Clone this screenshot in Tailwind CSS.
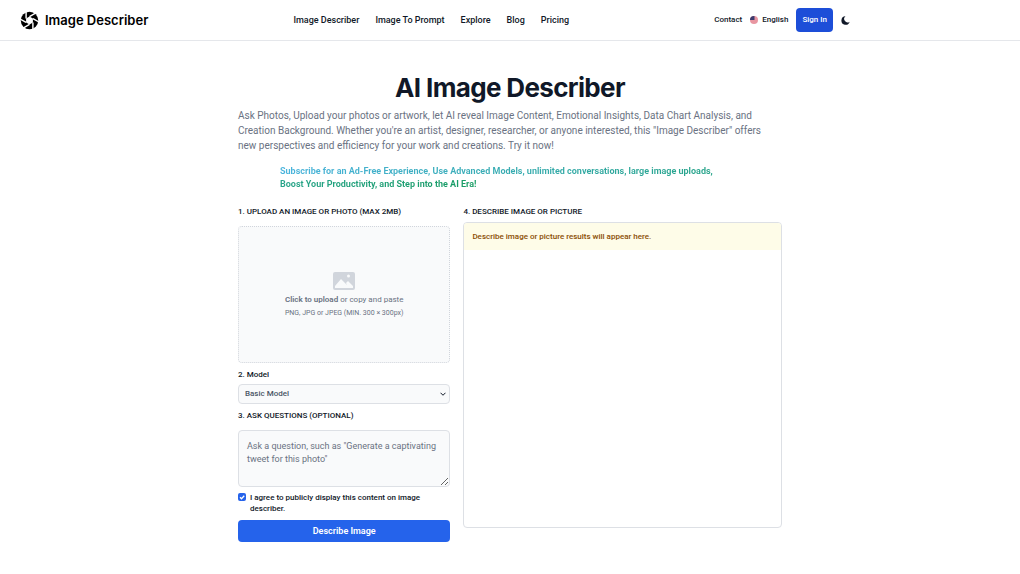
<!DOCTYPE html>
<html lang="en">
<head>
<meta charset="UTF-8">
<meta name="viewport" content="width=device-width, initial-scale=1.0">
<title>AI Image Describer</title>
<script src="https://cdn.jsdelivr.net/npm/@tailwindcss/browser@4"></script>
</head>
<body class="min-h-screen bg-white font-['Roboto',sans-serif] text-gray-900">

<!-- Header -->
<header class="border-b border-gray-200">
  <div class="w-5/6 h-10 pl-5 flex justify-between items-center">
    <a href="#" class="flex items-center gap-1.5 pt-px font-['Inter',sans-serif] text-[13px] font-semibold text-black">
      <svg class="w-[19px] h-[19px]" viewBox="0 0 24 24" fill="currentColor" aria-hidden="true">
        <circle cx="12" cy="12" r="11"/>
        <path fill="#fff" d="M12 7l4.300 2.500v5L12 17l-4.300-2.500v-5z"/>
        <path fill="none" stroke="#fff" stroke-width="1.800" d="M12 7l8.600-5M16.300 9.500l8.700 5M16.300 14.500v10M12 17l-8.600 5M7.700 14.500l-8.700-5M7.700 9.500v-10"/>
      </svg>
      Image Describer
    </a>
    <nav class="flex gap-4 pt-px text-[9px] leading-[13px] font-medium">
      <a href="#">Image Describer</a>
      <a href="#">Image To Prompt</a>
      <a href="#">Explore</a>
      <a href="#">Blog</a>
      <a href="#">Pricing</a>
    </nav>
    <div class="flex items-center gap-2 text-[8px] font-medium">
      <a href="#">Contact</a>
      <button type="button" class="flex items-center gap-1">
        <svg class="w-2 h-2 rounded-full" viewBox="0 0 16 16" aria-hidden="true">
          <path fill="#fff" d="M0 0h16v16H0z"/>
          <path fill="#d22f45" d="M0 1h16v2H0zM0 5h16v2H0zM0 9h16v2H0zM0 13h16v2H0z"/>
          <path fill="#3c3b6e" d="M0 0h9v8H0z"/>
        </svg>
        English
      </button>
      <a href="#" class="rounded bg-[#1d4ed8] px-1.5 py-1.5 text-white">Sign In</a>
      <button type="button" aria-label="Toggle dark mode">
        <svg class="w-[9px] h-[9px]" viewBox="0 0 20 20" fill="currentColor" aria-hidden="true"><path d="M10 .8A9.300 9.300 0 1 0 19.200 12.500 6.800 6.800 0 0 1 10 .8Z"/></svg>
      </button>
    </div>
  </div>
</header>

<main class="max-w-[544px] mx-auto pt-8">
  <h1 class="text-center font-['Inter',sans-serif] text-[26px] leading-[30px] font-bold tracking-tight">AI Image Describer</h1>
  <p class="mt-[5px] text-[10px] leading-[15px] text-gray-500">Ask Photos, Upload your photos or artwork, let AI reveal Image Content, Emotional Insights, Data Chart Analysis, and<br>Creation Background. Whether you're an artist, designer, researcher, or anyone interested, this "Image Describer" offers<br>new perspectives and efficiency for your work and creations. Try it now!</p>
  <div class="mt-3 px-[42px] text-[9px] leading-[13px] font-bold">
    <a href="#" class="bg-gradient-to-r from-[#4ab4dd] to-[#169b62] bg-clip-text text-transparent">Subscribe for an Ad-Free Experience, Use Advanced Models, unlimited conversations, large image uploads,<br>Boost Your Productivity, and Step into the AI Era!</a>
  </div>

  <div class="mt-[15px] grid grid-cols-[2fr_3fr] gap-[13px]">
    <form>
      <!-- Upload -->
      <h2 class="text-[8px] leading-[11px] font-medium uppercase">1. Upload an image or photo (max 2MB)</h2>
      <label for="photo" class="mt-[9px] h-[137px] flex flex-col items-center justify-center rounded border border-dotted border-gray-300 bg-gray-50 text-gray-500 cursor-pointer">
        <svg class="w-6 h-5 text-gray-300" viewBox="0 0 24 20" fill="currentColor" aria-hidden="true">
          <path fill-rule="evenodd" d="M3 1h18a2 2 0 0 1 2 2v14a2 2 0 0 1-2 2H3a2 2 0 0 1-2-2V3a2 2 0 0 1 2-2zM3 15v2h18v-2l-5-5-2 2 1 2-6-6zM15 5a1.500 1.500 0 1 0 3 0 1.500 1.500 0 1 0-3 0z"/>
        </svg>
        <span class="mt-[3px] text-[8px] leading-[11px]"><span class="font-semibold">Click to upload</span> or copy and paste</span>
        <span class="mt-1 text-[7px] leading-[9px]">PNG, JPG or JPEG (MIN. 300 × 300px)</span>
        <input id="photo" type="file" class="hidden">
      </label>

      <!-- Model -->
      <label for="model" class="mt-1.5 block text-[8px] leading-[11px] font-medium">2. Model</label>
      <div class="mt-1 grid items-center">
        <select id="model" class="col-start-1 row-start-1 h-5 w-full appearance-none rounded border border-[#dde0e5] bg-gray-50 px-1.5 text-[8px] font-medium text-gray-600">
          <option>Basic Model</option>
        </select>
        <svg class="col-start-1 row-start-1 justify-self-end mr-1 w-1.5 h-1.5 pointer-events-none" viewBox="0 0 12 12" fill="none" stroke="currentColor" stroke-width="2" aria-hidden="true"><path d="M1 3.500l5 5 5-5"/></svg>
      </div>

      <!-- Question -->
      <label for="question" class="mt-1.5 block text-[8px] leading-[11px] font-medium uppercase">3. Ask questions (optional)</label>
      <textarea id="question" class="mt-[9px] block h-[57px] w-full rounded border border-[#dde0e5] bg-gray-50 px-2 py-[9px] text-[9px] leading-[13px] placeholder:text-gray-500" placeholder="Ask a question, such as &quot;Generate a captivating tweet for this photo&quot;"></textarea>

      <div class="mt-[5px] flex items-start gap-1">
        <span class="grid shrink-0 pt-px">
          <input id="agree" type="checkbox" checked class="col-start-1 row-start-1 w-2 h-2 appearance-none rounded-xs bg-[#2563eb]">
          <svg class="col-start-1 row-start-1 w-2 h-2 pointer-events-none" viewBox="0 0 16 16" fill="none" stroke="#fff" stroke-width="2.500" aria-hidden="true"><path d="M4 8.500l3 3 5.500-6"/></svg>
        </span>
        <label for="agree" class="text-[8px] leading-[11px] font-medium">I agree to publicly display this content on image<br>describer.</label>
      </div>
      <button type="submit" class="mt-1.5 block h-[22px] w-full rounded bg-[#2563eb] text-[9px] leading-[13px] font-semibold text-white">Describe Image</button>
    </form>

    <!-- Results -->
    <section>
      <h2 class="text-[8px] leading-[11px] font-medium uppercase">4. Describe image or picture</h2>
      <div class="mt-[5px] h-[306px] overflow-hidden rounded border border-[#dde0e5]">
        <p class="bg-yellow-50 p-2 text-[8px] leading-[11px] font-medium text-yellow-800">Describe image or picture results will appear here.</p>
      </div>
    </section>
  </div>
</main>

</body>
</html>
